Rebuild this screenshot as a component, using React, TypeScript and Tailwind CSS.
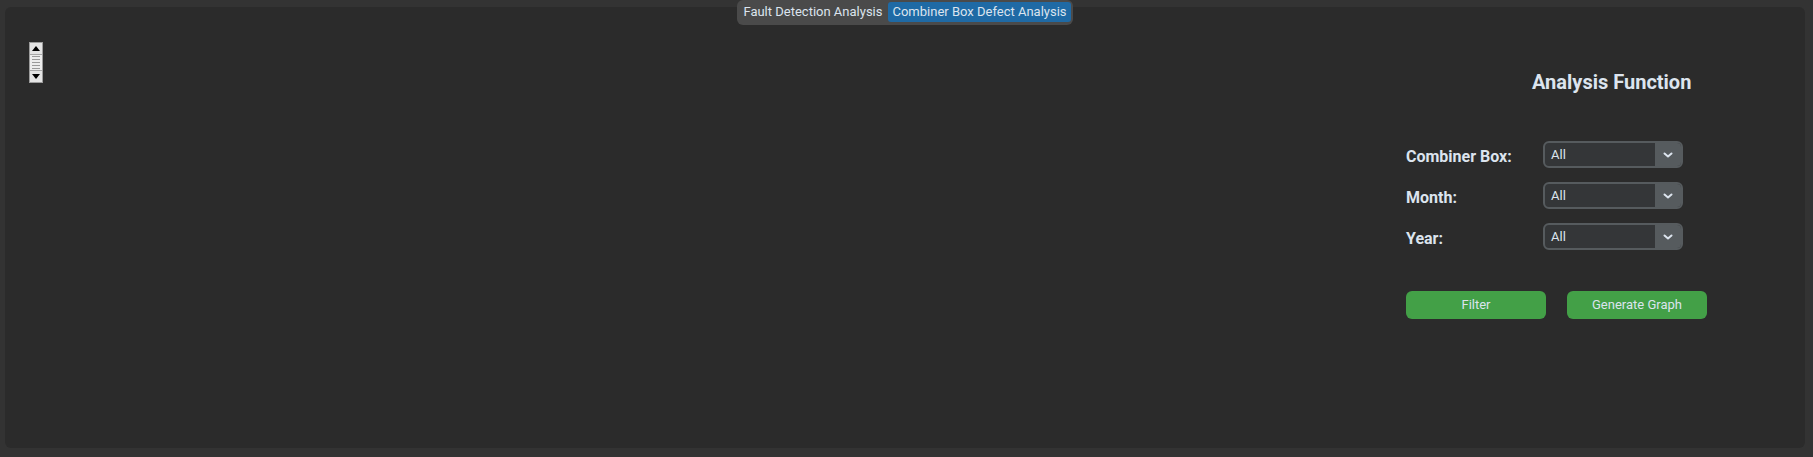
import React from "react";

const TEXT = "text-[#dce4ee]";

const Chevron = () => (
  <svg width="10" height="6" viewBox="0 0 10 6" fill="none">
    <polyline
      points="1.5,1.5 5,4.5 8.5,1.5"
      stroke="#dce4ee"
      strokeWidth="2"
      strokeLinecap="round"
      strokeLinejoin="round"
    />
  </svg>
);

const ComboBox = ({ value }: { value: string }) => (
  <div className="flex h-[27px] w-[140px] overflow-hidden rounded-[6px] border-2 border-[#565b5e] bg-[#343638]">
    <div className={`flex flex-1 items-center pl-[6px] text-[13px] leading-[16px] ${TEXT}`}>
      {value}
    </div>
    <div className="flex w-[26px] items-center justify-center bg-[#565b5e]">
      <Chevron />
    </div>
  </div>
);

const Row = ({ label }: { label: string }) => (
  <div className="flex items-start">
    <div className={`w-[137px] pt-[6px] text-[16px] font-bold leading-[20px] ${TEXT}`}>
      {label}
    </div>
    <ComboBox value="All" />
  </div>
);

// old-style Tk scrollbar widget sitting in the top-left corner
const TkScrollbar = () => (
  <div className="flex h-[41px] w-[14px] flex-col border border-[#9c9c9c] bg-[#d4d4d4]">
    <div className="flex h-[12px] items-center justify-center border-b border-[#a8a8a8] bg-[#e4e4e4]">
      <svg width="8" height="5" viewBox="0 0 8 5">
        <polygon points="4,0 8,5 0,5" fill="#000" />
      </svg>
    </div>
    <div className="flex flex-1 flex-col justify-center gap-[2px] bg-[#ededed] px-[2px]">
      {[0, 1, 2, 3, 4].map((i) => (
        <div key={i} className="h-px bg-[#9a9a9a]" />
      ))}
    </div>
    <div className="flex h-[12px] items-center justify-center border-t border-[#a8a8a8] bg-[#e4e4e4]">
      <svg width="8" height="5" viewBox="0 0 8 5">
        <polygon points="0,0 8,0 4,5" fill="#000" />
      </svg>
    </div>
  </div>
);

export default function App() {
  return (
    <div className="h-[457px] w-[1813px] overflow-hidden bg-[#333333] font-['Roboto','Liberation_Sans',sans-serif]">
      <div className="ml-[5px] flex w-[1800px] flex-col items-center">
        {/* segmented tab switcher */}
        <div className="relative z-10 flex h-[25px] gap-[2px] rounded-[6px] bg-[#4a4a4a] px-[2px] pt-[2px]">
          <div className={`h-[20px] rounded-[3px] px-[4px] text-[13px] leading-[20px] ${TEXT}`}>
            Fault Detection Analysis
          </div>
          <div className={`h-[20px] rounded-[3px] bg-[#1f6aa5] px-[4px] text-[13px] leading-[20px] ${TEXT}`}>
            Combiner Box Defect Analysis
          </div>
        </div>

        <div className="-mt-[18px] flex h-[441px] w-[1800px] rounded-[6px] bg-[#2b2b2b]">
          <div className="flex-1 pl-[24px] pt-[35px]">
            <TkScrollbar />
          </div>

          <div className="flex w-[399px] flex-col pt-[64px]">
            <div className={`pl-[126px] text-[20px] font-bold leading-[22px] ${TEXT}`}>
              Analysis Function
            </div>

            <div className="mt-[48px] flex flex-col gap-[14px]">
              <Row label="Combiner Box:" />
              <Row label="Month:" />
              <Row label="Year:" />
            </div>

            <div className="mt-[41px] flex gap-[21px]">
              <button className={`h-[28px] w-[140px] rounded-[6px] bg-[#43a047] text-[13px] ${TEXT}`}>
                Filter
              </button>
              <button className={`h-[28px] w-[140px] rounded-[6px] bg-[#43a047] text-[13px] ${TEXT}`}>
                Generate Graph
              </button>
            </div>
          </div>
        </div>
      </div>
    </div>
  );
}
